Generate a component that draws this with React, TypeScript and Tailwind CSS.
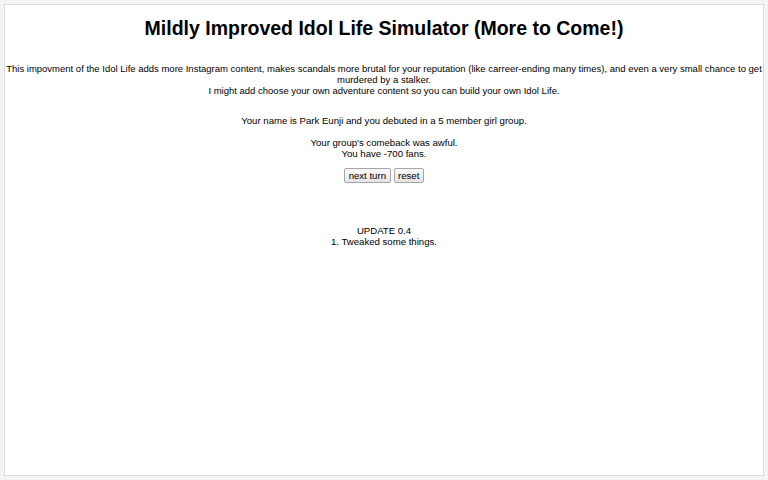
import { useState } from 'react';

const intro =
  'This impovment of the Idol Life adds more Instagram content, makes scandals more brutal for your reputation (like carreer-ending many times), and even a very small chance to get murdered by a stalker.';

export default function App() {
  const [fans, setFans] = useState(-700);

  return (
    <div className="min-h-screen bg-[#f3f3f3] p-[4px] font-['Liberation_Sans',Arial,sans-serif] text-black">
      <div className="h-[472px] border border-[#dcdcdc] bg-white text-center">
        <h1 className="mt-[10px] text-[19.5px] font-bold leading-[26px]">
          Mildly Improved Idol Life Simulator (More to Come!)
        </h1>

        {/* intro blurb */}
        <div className="mt-[22px] text-[9.5px] leading-[11px]">
          <p>{intro}</p>
          <p>I might add choose your own adventure content so you can build your own Idol Life.</p>
        </div>

        <p className="mt-[19px] text-[9.6px] leading-[11px]">
          Your name is Park Eunji and you debuted in a 5 member girl group.
        </p>

        <div className="mt-[11px] text-[9.6px] leading-[11px]">
          <p>Your group's comeback was awful.</p>
          <p>You have {fans} fans.</p>
        </div>

        <div className="mt-[9px] flex justify-center gap-[3px]">
          <TurnButton onClick={() => setFans((f) => f + 100)}>next turn</TurnButton>
          <TurnButton onClick={() => setFans(-700)}>reset</TurnButton>
        </div>

        {/* changelog */}
        <div className="mt-[42px] text-[9.6px] leading-[11px]">
          <p>UPDATE 0.4</p>
          <p>1. Tweaked some things.</p>
        </div>
      </div>
    </div>
  );
}

function TurnButton({ onClick, children }: { onClick: () => void; children: React.ReactNode }) {
  return (
    <button
      onClick={onClick}
      className="h-[15px] rounded-[2px] border border-[#a6a6a6] bg-gradient-to-b from-[#fafafa] to-[#e4e4e4] px-[3.5px] text-[9.6px] leading-[13px] text-black"
    >
      {children}
    </button>
  );
}
